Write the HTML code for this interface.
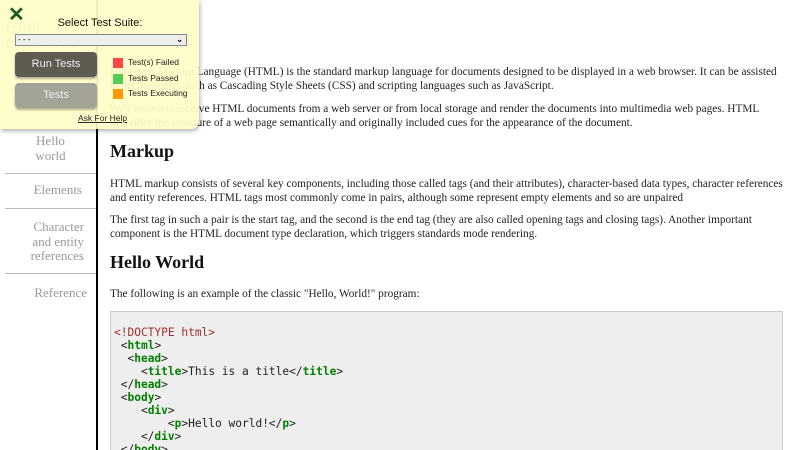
<!DOCTYPE html>
<html style="overflow:hidden;width:800px;height:450px"><head><style>
body{margin:0;width:800px;height:450px;overflow:hidden;background:#fff;font-family:"Liberation Serif",serif;position:relative}
.side{position:absolute;left:0;top:0;width:96px;height:450px;border-right:2px solid #000}
.nav{position:absolute;left:5px;width:91px;color:#999;font-size:13px;line-height:14.5px;text-align:center;border-bottom:1px solid #bbb}
.t{position:absolute;left:110px;font-size:11.3px;line-height:14px;color:#222;white-space:nowrap}
h2{position:absolute;left:110px;margin:0;font-size:18px;font-weight:bold;color:#111}
.code{position:absolute;left:110px;top:311px;width:673px;height:160px;box-sizing:border-box;background:#eee;border:1px solid #ccc;font-family:"DejaVu Sans Mono",monospace;font-size:11.2px;line-height:13px;color:#222;white-space:pre;padding-top:14px;padding-left:3px}
.r{color:#a03030}.g{color:#008000;font-weight:bold}
.ov{position:absolute;left:0;top:0;width:199px;height:129px;background:rgba(255,253,200,0.93);border-radius:0 0 8px 0;box-shadow:1px 2px 4px rgba(0,0,0,0.3);font-family:"Liberation Sans",sans-serif}
.btn{position:absolute;left:15px;width:82px;height:25px;border-radius:4px;color:#eee;font-size:11px;text-align:center;line-height:25px;box-shadow:0 2px 2px rgba(0,0,0,0.3)}
.lg{position:absolute;left:113px;font-size:8.5px;color:#222}
.lg i{position:absolute;left:0;top:0;width:10px;height:10px}
.lg span{position:absolute;left:15px;top:-1px;white-space:nowrap}
</style></head><body>
<div class="side">
<div style="position:absolute;left:5px;top:20px;color:#bbb;font-size:16px;line-height:16px;font-weight:bold">Html<br>Document</div>
<div class="nav" style="top:88px;height:0"></div>
<div class="nav" style="top:134px;height:39px">Hello<br>world</div>
<div class="nav" style="top:183px;height:25px;text-align:right;padding-right:14px;width:77px">Elements</div>
<div class="nav" style="top:220px;height:53px;text-align:right;padding-right:12px;width:79px">Character<br>and entity<br>references</div>
<div style="position:absolute;left:5px;top:285px;width:82px;text-align:right;color:#999;font-size:13px">Reference</div>
</div>
<div class="t" style="top:65px">Hypertext Markup Language (HTML) is the standard markup language for documents designed to be displayed in a web browser. It can be assisted<br>by technologies such as Cascading Style Sheets (CSS) and scripting languages such as JavaScript.</div>
<div class="t" style="top:102px">Web browsers receive HTML documents from a web server or from local storage and render the documents into multimedia web pages. HTML<br>describes the structure of a web page semantically and originally included cues for the appearance of the document.</div>
<h2 style="top:141px">Markup</h2>
<div class="t" style="top:177px">HTML markup consists of several key components, including those called tags (and their attributes), character-based data types, character references<br>and entity references. HTML tags most commonly come in pairs, although some represent empty elements and so are unpaired</div>
<div class="t" style="top:213px">The first tag in such a pair is the start tag, and the second is the end tag (they are also called opening tags and closing tags). Another important<br>component is the HTML document type declaration, which triggers standards mode rendering.</div>
<h2 style="top:252px">Hello World</h2>
<div class="t" style="top:287px">The following is an example of the classic "Hello, World!" program:</div>
<div class="code"><span class="r">&lt;!DOCTYPE html&gt;</span>
 &lt;<span class="g">html</span>&gt;
  &lt;<span class="g">head</span>&gt;
    &lt;<span class="g">title</span>&gt;This is a title&lt;/<span class="g">title</span>&gt;
 &lt;/<span class="g">head</span>&gt;
 &lt;<span class="g">body</span>&gt;
    &lt;<span class="g">div</span>&gt;
        &lt;<span class="g">p</span>&gt;Hello world!&lt;/<span class="g">p</span>&gt;
    &lt;/<span class="g">div</span>&gt;
 &lt;/<span class="g">body</span>&gt;</div>
<div class="ov">
<div style="position:absolute;left:8px;top:2px;color:#1a5c1a;font-size:20px;font-weight:bold">✕</div>
<div style="position:absolute;left:0;width:200px;top:17px;text-align:center;font-size:11px;color:#111">Select Test Suite:</div>
<div style="position:absolute;left:15px;top:34px;width:168px;height:10px;border:1px solid #888;background:#eee;font-size:8px;line-height:10px;padding-left:2px">- - -<span style="position:absolute;right:3px;font-weight:bold">⌄</span></div>
<div class="btn" style="top:52px;background:#5e5c50">Run Tests</div>
<div class="btn" style="top:83px;background:#a4a397">Tests</div>
<div class="lg" style="top:58px"><i style="background:#f44"></i><span>Test(s) Failed</span></div>
<div class="lg" style="top:74px"><i style="background:#5c5"></i><span>Tests Passed</span></div>
<div class="lg" style="top:89px"><i style="background:#f90"></i><span>Tests Executing</span></div>
<div style="position:absolute;left:78px;top:113px;font-size:8.5px;text-decoration:underline;color:#222">Ask For Help</div>
</div>
</body></html>
